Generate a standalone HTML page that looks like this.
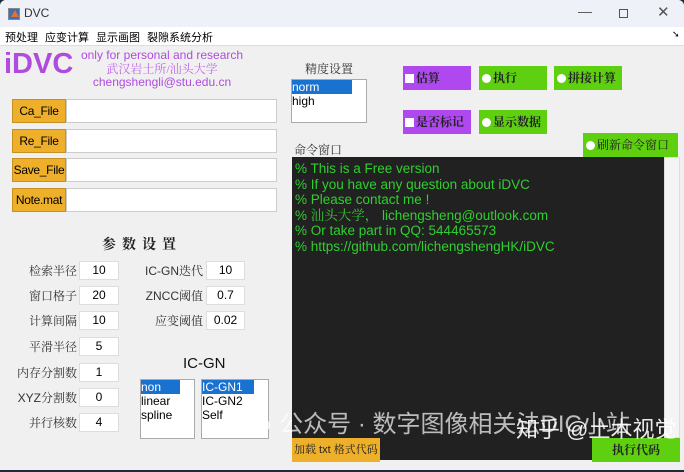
<!DOCTYPE html>
<html><head><meta charset="utf-8"><style>
*{margin:0;padding:0;box-sizing:border-box}
body{width:684px;height:472px;overflow:hidden;background:#1c2a3a;font-family:"Liberation Sans","Noto Sans CJK SC",sans-serif;position:relative}
.a{position:absolute}
#win{left:0;top:0;width:684px;height:470px;background:#f0f0f0;border-radius:6px 6px 0 0;overflow:hidden}
#title{left:0;top:0;width:684px;height:27px;background:#eef1f7;font-size:12px;color:#333}
#menu{left:0;top:27px;width:684px;height:19px;background:#fff;border-bottom:1px solid #ddd;font-size:11px;color:#000}
.btn{background:#eeb02a;border:1px solid #c89020;font-size:12px;text-align:center;line-height:22px;color:#000;white-space:nowrap;letter-spacing:-0.3px}
.tf{background:#fff;border:1px solid #ccc}
.serif{font-family:"Liberation Serif","Noto Serif CJK SC",serif}
.pb{background:#b048f0;font-family:"Noto Serif CJK SC",serif;font-weight:bold;font-size:12px;line-height:23px;color:#222}
.gb{background:#5ed010;font-family:"Noto Serif CJK SC",serif;font-weight:bold;font-size:12px;line-height:23px;color:#222}
.cb{display:inline-block;width:9px;height:9px;background:#fff;margin:0 2px 0 2px;vertical-align:-1px}
.rb{display:inline-block;width:9px;height:9px;background:#fff;border-radius:50%;margin:0 2px 0 3px;vertical-align:-1px}
.lb{font-family:"Noto Serif CJK SC",serif;font-size:12px;color:#333;text-align:right}
.in{background:#fff;border:1px solid #ddd;font-size:12px;text-align:center;line-height:17px;height:19px}
.list{background:#fff;border:1px solid #aaa;font-size:12px;line-height:14px}
.sel{background:#1a72d0;color:#fff}
#con{left:292px;top:157px;width:372px;height:303px;background:#212121;color:#2fcf2f;font-size:13.5px;line-height:15.5px;padding:4px 0 0 3px}
</style></head><body>
<div id="win" class="a">
<div id="title" class="a">
 <div class="a" style="left:8px;top:8px;width:12px;height:12px;background:#3b6fb8;border:1px solid #888"></div>
 <div class="a" style="left:11px;top:10px;width:0;height:0;border-left:4px solid transparent;border-right:4px solid transparent;border-bottom:7px solid #e8702a"></div>
 <div class="a" style="left:24px;top:6px">DVC</div>
 <div class="a" style="left:578px;top:3px;font-size:14px;color:#555">—</div>
 <div class="a" style="left:619px;top:9px;width:9px;height:9px;border:1px solid #555"></div>
 <div class="a" style="left:657px;top:3px;font-size:15px;color:#555">✕</div>
</div>
<div id="menu" class="a">
 <span class="a" style="left:5px;top:2px">预处理</span>
 <span class="a" style="left:45px;top:2px">应变计算</span>
 <span class="a" style="left:96px;top:2px">显示画图</span>
 <span class="a" style="left:147px;top:2px">裂隙系统分析</span>
 <span class="a" style="left:672px;top:2px;font-size:9px">➘</span>
</div>
<div class="a" style="left:4px;top:48px;font-size:29px;font-weight:bold;color:#b04be0">iDVC</div>
<div class="a" style="left:80px;top:49px;width:164px;text-align:center;font-size:12px;line-height:13.5px;color:#b04be0">only for personal and research<br><span class="serif" style="color:#c06ae8">武汉岩土所/汕头大学</span><br>chengshengli@stu.edu.cn</div>

<div class="a btn" style="left:12px;top:99px;width:54px;height:24px">Ca_File</div><div class="a tf" style="left:66px;top:99px;width:211px;height:24px"></div>
<div class="a btn" style="left:12px;top:129px;width:54px;height:24px">Re_File</div><div class="a tf" style="left:66px;top:129px;width:211px;height:24px"></div>
<div class="a btn" style="left:12px;top:158px;width:54px;height:24px">Save_File</div><div class="a tf" style="left:66px;top:158px;width:211px;height:24px"></div>
<div class="a btn" style="left:12px;top:188px;width:54px;height:24px">Note.mat</div><div class="a tf" style="left:66px;top:188px;width:211px;height:24px"></div>

<div class="a serif" style="left:305px;top:60px;font-size:12px;color:#333">精度设置</div>
<div class="a list" style="left:291px;top:79px;width:76px;height:44px"><div class="sel" style="width:60px">norm</div><div>high</div></div>

<div class="a pb" style="left:403px;top:66px;width:68px;height:24px"><span class="cb"></span>估算</div>
<div class="a gb" style="left:479px;top:66px;width:68px;height:24px"><span class="rb"></span>执行</div>
<div class="a gb" style="left:554px;top:66px;width:68px;height:24px"><span class="rb"></span>拼接计算</div>
<div class="a pb" style="left:403px;top:110px;width:68px;height:24px"><span class="cb"></span>是否标记</div>
<div class="a gb" style="left:479px;top:110px;width:68px;height:24px"><span class="rb"></span>显示数据</div>
<div class="a gb" style="left:583px;top:133px;width:95px;height:24px;font-weight:normal"><span class="rb"></span>刷新命令窗口</div>
<div class="a serif" style="left:294px;top:141px;font-size:12px;color:#333">命令窗口</div>

<div id="con" class="a">% This is a Free version<br>% If you have any question about iDVC<br>% Please contact me !<br>% <span class="serif">汕头大学，</span> lichengsheng@outlook.com<br>% Or take part in QQ: 544465573<br>% https://github.com/lichengshengHK/iDVC</div>
<div class="a" style="left:664px;top:157px;width:16px;height:281px;background:#f4f4f4;border:1px solid #ddd"></div>

<div class="a serif" style="left:102px;top:234px;font-size:14px;font-weight:bold;letter-spacing:6px;color:#222">参数设置</div>
<div class="a lb" style="left:10px;top:262px;width:67px">检索半径</div><div class="a in" style="left:79px;top:261px;width:40px">10</div>
<div class="a lb" style="left:10px;top:287px;width:67px">窗口格子</div><div class="a in" style="left:79px;top:286px;width:40px">20</div>
<div class="a lb" style="left:10px;top:312px;width:67px">计算间隔</div><div class="a in" style="left:79px;top:311px;width:40px">10</div>
<div class="a lb" style="left:10px;top:338px;width:67px">平滑半径</div><div class="a in" style="left:79px;top:337px;width:40px">5</div>
<div class="a lb" style="left:10px;top:364px;width:67px">内存分割数</div><div class="a in" style="left:79px;top:363px;width:40px">1</div>
<div class="a lb" style="left:10px;top:389px;width:67px;font-family:'Liberation Sans','Noto Serif CJK SC',sans-serif">XYZ分割数</div><div class="a in" style="left:79px;top:388px;width:40px">0</div>
<div class="a lb" style="left:10px;top:414px;width:67px">并行核数</div><div class="a in" style="left:79px;top:413px;width:40px">4</div>

<div class="a lb" style="left:130px;top:262px;width:73px;font-family:'Liberation Sans','Noto Serif CJK SC',sans-serif">IC-GN迭代</div><div class="a in" style="left:206px;top:261px;width:39px">10</div>
<div class="a lb" style="left:130px;top:287px;width:73px;font-family:'Liberation Sans','Noto Serif CJK SC',sans-serif">ZNCC阈值</div><div class="a in" style="left:206px;top:286px;width:39px">0.7</div>
<div class="a lb" style="left:130px;top:312px;width:73px">应变阈值</div><div class="a in" style="left:206px;top:311px;width:39px">0.02</div>

<div class="a" style="left:183px;top:355px;font-size:15px;color:#111">IC-GN</div>
<div class="a list" style="left:140px;top:379px;width:55px;height:60px"><div class="sel" style="width:39px">non</div><div>linear</div><div>spline</div></div>
<div class="a list" style="left:201px;top:379px;width:68px;height:60px"><div class="sel" style="width:52px">IC-GN1</div><div>IC-GN2</div><div>Self</div></div>

<div class="a" style="left:292px;top:438px;width:88px;height:24px;background:#eeb02a;font-size:11px;line-height:24px;color:#222;padding-left:2px"><span class="serif">加载</span> txt <span class="serif">格式代码</span></div>
<div class="a gb" style="left:592px;top:438px;width:88px;height:24px;text-align:center">执行代码</div>

<div class="a" style="left:258px;top:404px;font-size:24px;color:rgba(255,255,255,0.7);white-space:nowrap">● 公众号 · 数字图像相关法DIC小站</div>
<div class="a" style="left:516px;top:412px;font-size:22px;color:rgba(255,255,255,0.9);white-space:nowrap">知乎 @土木视觉</div>
</div>
</body></html>
